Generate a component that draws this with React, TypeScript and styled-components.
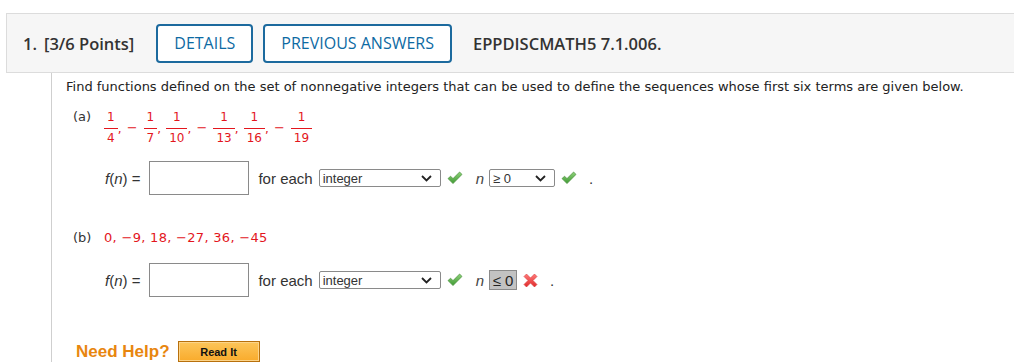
import React from "react";
import styled, { createGlobalStyle } from "styled-components";

const Global = createGlobalStyle`
  html, body { margin: 0; padding: 0; background: #fff; }
  body { font-family: "Liberation Sans", Arial, sans-serif; color: #222; }
`;

const Page = styled.div`
  padding: 13px 0 0 6px;
  width: 1014px;
  box-sizing: border-box;
  overflow: hidden;
  height: 362px;
`;

const Header = styled.div`
  display: flex;
  align-items: center;
  height: 58px;
  background: #f6f6f6;
  border: 1px solid #dcdcdc;
  border-right: none;
  padding-left: 16px;
  font-family: "Open Sans", sans-serif;
  font-size: 16.5px;
  color: #333;
`;

const QNum = styled.span`
  font-weight: 600;
  margin-right: 7px;
`;

const Points = styled.span`
  font-weight: 600;
  margin-right: 22px;
`;

const HeaderButton = styled.button`
  height: 39px;
  box-sizing: border-box;
  border: 2px solid #1c6a9e;
  border-radius: 4px;
  background: #fff;
  color: #0d6aa3;
  font-family: "Open Sans", sans-serif;
  font-size: 16px;
  padding: 0 16px;
  margin-right: 10px;
  cursor: pointer;
`;

const Code = styled.span`
  font-weight: 600;
  margin-left: 11px;
`;

const Content = styled.div`
  margin-left: 45px;
  border-left: 1px solid #cfcfcf;
  padding: 5px 0 40px 14px;
`;

const Prompt = styled.div`
  font-family: "DejaVu Sans", Verdana, sans-serif;
  font-size: 13px;
  line-height: 18px;
  color: #222;
`;

const Part = styled.div<{ $top: number }>`
  display: flex;
  align-items: flex-start;
  margin: ${(p) => p.$top}px 0 0 7px;
  font-family: "DejaVu Sans", Verdana, sans-serif;
  font-size: 13px;
  line-height: 18px;
`;

const PartLabel = styled.span<{ $shift: number }>`
  width: 31px;
  flex: none;
  margin-top: ${(p) => p.$shift}px;
  color: #333;
`;

const Sequence = styled.div`
  display: flex;
  align-items: center;
  color: #e3161d;
  font-size: 12px;
`;

const Frac = styled.span`
  display: inline-flex;
  flex-direction: column;
  align-items: stretch;
  text-align: center;
  line-height: 15px;
`;

const Num = styled.span`
  padding: 0 3px 3px;
`;

const Bar = styled.span`
  height: 1px;
  background: #e3161d;
`;

const Den = styled.span`
  padding: 2px 3px 0;
`;

const Comma = styled.span`
  margin-top: 2px;
  width: 9px;
`;

const Minus = styled.span`
  margin-right: 6px;
  font-size: 13px;
`;

const Plain = styled.span`
  color: #e3161d;
  letter-spacing: 0.3px;
`;

const FormRow = styled.div<{ $top: number }>`
  display: flex;
  align-items: center;
  margin: ${(p) => p.$top}px 0 0 39px;
  font-family: "Liberation Sans", Arial, sans-serif;
  font-size: 15px;
  color: #333;
`;

const FnLabel = styled.span`
  margin-right: 9px;
  white-space: pre;
  i { font-style: italic; }
`;

const AnswerBox = styled.div`
  width: 100px;
  height: 34px;
  box-sizing: border-box;
  border: 1px solid #8a8a8a;
  background: #fff;
  margin-right: 9px;
`;

const ForEach = styled.span`
  margin-right: 6px;
`;

const SelectBox = styled.div<{ $w: number }>`
  display: flex;
  align-items: center;
  justify-content: space-between;
  width: ${(p) => p.$w}px;
  height: 18px;
  box-sizing: border-box;
  border: 1px solid #8a8a8a;
  border-radius: 2px;
  padding: 0 8px 0 3px;
  font-size: 13px;
  color: #333;
  background: #fff;
`;

const VarN = styled.span`
  font-style: italic;
  margin: 0 5px 0 13px;
  color: #444;
`;

const StaticBox = styled.div`
  width: 28px;
  height: 20px;
  box-sizing: border-box;
  border: 1px solid #8a8a8a;
  background: #c2c2c2;
  display: flex;
  align-items: center;
  justify-content: center;
  font-size: 15px;
  color: #222;
  white-space: pre;
`;

const Mark = styled.span`
  display: inline-flex;
  margin-left: 6px;
`;

const Dot = styled.span<{ $gap: number }>`
  margin-left: ${(p) => p.$gap}px;
`;

const HelpRow = styled.div`
  display: flex;
  align-items: center;
  margin: 44px 0 0 10px;
`;

const NeedHelp = styled.span`
  font-family: "Liberation Sans", Arial, sans-serif;
  font-weight: bold;
  font-size: 17px;
  line-height: 20px;
  color: #e8860f;
  margin-right: 8px;
`;

const ReadIt = styled.button`
  width: 82px;
  height: 21px;
  box-sizing: border-box;
  border: 1px solid #b8700c;
  box-shadow: inset 0 0 0 1px #fcd48a;
  background: linear-gradient(#fcc55a, #f9ab2c);
  font-family: "Liberation Sans", Arial, sans-serif;
  font-weight: bold;
  font-size: 11px;
  color: #111;
  padding: 0;
`;

const Chevron = () => (
  <svg width="11" height="7" viewBox="0 0 11 7">
    <polyline points="1,1 5.5,5.5 10,1" fill="none" stroke="#222" strokeWidth="1.8" />
  </svg>
);

const Check = () => (
  <svg width="16" height="14" viewBox="0 0 16 14">
    <defs>
      <linearGradient id="ck" x1="0" y1="0" x2="0" y2="1">
        <stop offset="0" stopColor="#8fd27a" />
        <stop offset="1" stopColor="#3f9a33" />
      </linearGradient>
    </defs>
    <path
      d="M1 7.6 L3.6 5.2 L6 7.6 L12.6 1 L15 3.4 L6 12.6 Z"
      fill="url(#ck)"
      stroke="#4b8f3e"
      strokeWidth="0.7"
      strokeLinejoin="round"
    />
  </svg>
);

const Cross = () => (
  <svg width="15" height="15" viewBox="0 0 15 15">
    <defs>
      <linearGradient id="cx" x1="0" y1="0" x2="0" y2="1">
        <stop offset="0" stopColor="#ff7a7a" />
        <stop offset="1" stopColor="#e02a2a" />
      </linearGradient>
    </defs>
    <path
      d="M1 3.5 L3.5 1 L7.5 5 L11.5 1 L14 3.5 L10 7.5 L14 11.5 L11.5 14 L7.5 10 L3.5 14 L1 11.5 L5 7.5 Z"
      fill="url(#cx)"
      stroke="#d83a3a"
      strokeWidth="0.6"
      strokeLinejoin="round"
    />
  </svg>
);

const Fraction = ({ d }: { d: string }) => (
  <Frac>
    <Num>1</Num>
    <Bar />
    <Den>{d}</Den>
  </Frac>
);

export default function App() {
  return (
    <>
      <Global />
      <Page>
        <Header>
          <QNum>1.</QNum>
          <Points>[3/6 Points]</Points>
          <HeaderButton>DETAILS</HeaderButton>
          <HeaderButton>PREVIOUS ANSWERS</HeaderButton>
          <Code>EPPDISCMATH5 7.1.006.</Code>
        </Header>
        <Content>
          <Prompt>
            Find functions defined on the set of nonnegative integers that can be used to define the sequences whose first six terms are given below.
          </Prompt>
          <Part $top={14}>
            <PartLabel $shift={-2}>(a)</PartLabel>
            <Sequence>
              <Fraction d="4" />
              <Comma>,</Comma>
              <Minus>−</Minus>
              <Fraction d="7" />
              <Comma>,</Comma>
              <Fraction d="10" />
              <Comma>,</Comma>
              <Minus>−</Minus>
              <Fraction d="13" />
              <Comma>,</Comma>
              <Fraction d="16" />
              <Comma>,</Comma>
              <Minus>−</Minus>
              <Fraction d="19" />
            </Sequence>
          </Part>
          <FormRow $top={15}>
            <FnLabel>
              <i>f</i>(<i>n</i>) =
            </FnLabel>
            <AnswerBox />
            <ForEach>for each</ForEach>
            <SelectBox $w={122}>
              integer
              <Chevron />
            </SelectBox>
            <Mark>
              <Check />
            </Mark>
            <VarN>n</VarN>
            <SelectBox $w={66}>
              ≥ 0
              <Chevron />
            </SelectBox>
            <Mark>
              <Check />
            </Mark>
            <Dot $gap={12}>.</Dot>
          </FormRow>
          <Part $top={34}>
            <PartLabel $shift={0}>(b)</PartLabel>
            <Plain>0, −9, 18, −27, 36, −45</Plain>
          </Part>
          <FormRow $top={16}>
            <FnLabel>
              <i>f</i>(<i>n</i>) =
            </FnLabel>
            <AnswerBox />
            <ForEach>for each</ForEach>
            <SelectBox $w={122}>
              integer
              <Chevron />
            </SelectBox>
            <Mark>
              <Check />
            </Mark>
            <VarN>n</VarN>
            <StaticBox>≤ 0</StaticBox>
            <Mark>
              <Cross />
            </Mark>
            <Dot $gap={12}>.</Dot>
          </FormRow>
          <HelpRow>
            <NeedHelp>Need Help?</NeedHelp>
            <ReadIt>Read It</ReadIt>
          </HelpRow>
        </Content>
      </Page>
    </>
  );
}
